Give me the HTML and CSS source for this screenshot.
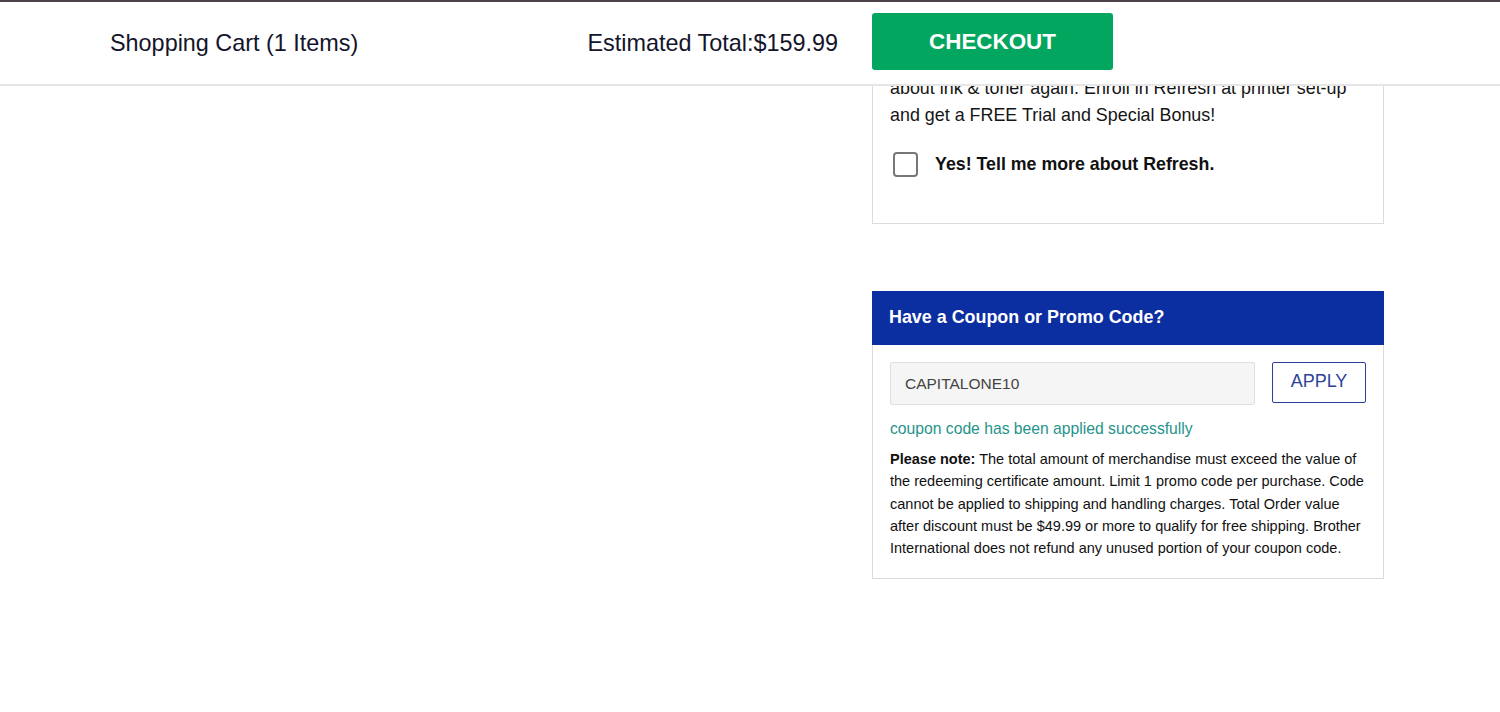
FILE: index.html
```html
<!DOCTYPE html>
<html lang="en">
<head>
<meta charset="utf-8">
<title>Shopping Cart</title>
<link rel="stylesheet" href="styles.css">
</head>
<body>
<header class="cart-bar">
  <div class="cart-bar-inner">
    <div class="cart-info">
      <span class="cart-title">Shopping Cart (1 Items)</span>
      <span class="cart-total">Estimated Total:$159.99</span>
    </div>
    <button class="checkout-btn" type="button">CHECKOUT</button>
  </div>
</header>
<main class="page">
  <div class="spacer"></div>
  <aside class="sidebar">
    <section class="card refresh-card">
      <p class="refresh-text">Brother Refresh EZ Print Subscription. Never worry<br>about ink &amp; toner again. Enroll in Refresh at printer set-up<br>and get a FREE Trial and Special Bonus!</p>
      <label class="check-row">
        <span class="checkbox"></span>
        <span class="check-label">Yes! Tell me more about Refresh.</span>
      </label>
    </section>
    <section class="card coupon-card">
      <div class="coupon-head">Have a Coupon or Promo Code?</div>
      <div class="coupon-body">
        <div class="coupon-form">
          <div class="coupon-input">CAPITALONE10</div>
          <button class="apply-btn" type="button">APPLY</button>
        </div>
        <p class="coupon-success">coupon code has been applied successfully</p>
        <p class="coupon-note"><strong>Please note:</strong> The total amount of merchandise must exceed the value of<br>the redeeming certificate amount. Limit 1 promo code per purchase. Code<br>cannot be applied to shipping and handling charges. Total Order value<br>after discount must be $49.99 or more to qualify for free shipping. Brother<br>International does not refund any unused portion of your coupon code.</p>
      </div>
    </section>
  </aside>
</main>
</body>
</html>
```

FILE: styles.css
```css
* { box-sizing: border-box; }
html, body { margin: 0; padding: 0; background: #fff; }
body {
  font-family: "Liberation Sans", Arial, sans-serif;
  color: #111;
  width: 1500px;
  height: 712px;
  overflow: hidden;
}
.cart-bar {
  position: fixed;
  top: 0;
  left: 0;
  right: 0;
  height: 86px;
  background: #fff;
  border-top: 2px solid #4b4249;
  border-bottom: 2px solid #e6e6e6;
  z-index: 10;
}
.cart-bar-inner {
  display: grid;
  grid-template-columns: 872px 241px;
  align-items: center;
  height: 100%;
}
.cart-info {
  display: flex;
  justify-content: space-between;
  align-items: center;
  padding-left: 110px;
  padding-right: 34px;
  font-size: 23.4px;
  color: #14142b;
}
.checkout-btn {
  height: 57px;
  margin-top: -3px;
  border: none;
  border-radius: 3px;
  background: #03a65e;
  color: #fff;
  font-family: "Liberation Sans", Arial, sans-serif;
  font-weight: bold;
  font-size: 22.4px;
  padding: 0;
}
.page {
  display: grid;
  grid-template-columns: 872px 512px;
  padding-top: 29px;
}
.sidebar {
  display: flex;
  flex-direction: column;
  gap: 67px;
}
.card {
  border: 1px solid #dcdcdc;
  background: #fff;
}
.refresh-card {
  padding: 18px 17px 46px;
}
.refresh-text {
  margin: 0;
  font-size: 17.9px;
  line-height: 27px;
  color: #151515;
  white-space: nowrap;
}
.check-row {
  display: flex;
  align-items: center;
  margin-top: 23px;
  padding-left: 3px;
}
.checkbox {
  width: 25px;
  height: 25px;
  border: 2px solid #777;
  border-radius: 4px;
  background: #fff;
}
.check-label {
  margin-left: 17px;
  font-weight: bold;
  font-size: 17.8px;
  color: #111;
}
.coupon-card {
  border-top: none;
}
.coupon-head {
  height: 54px;
  display: flex;
  align-items: center;
  padding: 0 17px 2px;
  margin: 0 -1px;
  background: #0b2ea1;
  color: #fff;
  font-weight: bold;
  font-size: 17.9px;
}
.coupon-body {
  padding: 17px 17px 19px;
}
.coupon-form {
  display: flex;
  align-items: flex-start;
  gap: 17px;
}
.coupon-input {
  width: 365px;
  height: 43px;
  background: #f5f5f5;
  border: 1px solid #dfdfdf;
  border-radius: 2px;
  font-size: 15.5px;
  color: #444;
  display: flex;
  align-items: center;
  padding-left: 14px;
}
.apply-btn {
  width: 94px;
  height: 41px;
  background: #fff;
  border: 1px solid #2c3f9a;
  border-radius: 2px;
  color: #2c3f9a;
  font-family: "Liberation Sans", Arial, sans-serif;
  font-size: 18px;
  padding: 0 0 2px;
}
.coupon-success {
  margin: 14px 0 0;
  font-size: 15.7px;
  line-height: 20px;
  color: #25938b;
}
.coupon-note {
  margin: 9px 0 0;
  font-size: 14.5px;
  line-height: 22.3px;
  color: #111;
  white-space: nowrap;
}
.coupon-note strong { font-weight: bold; }
```
